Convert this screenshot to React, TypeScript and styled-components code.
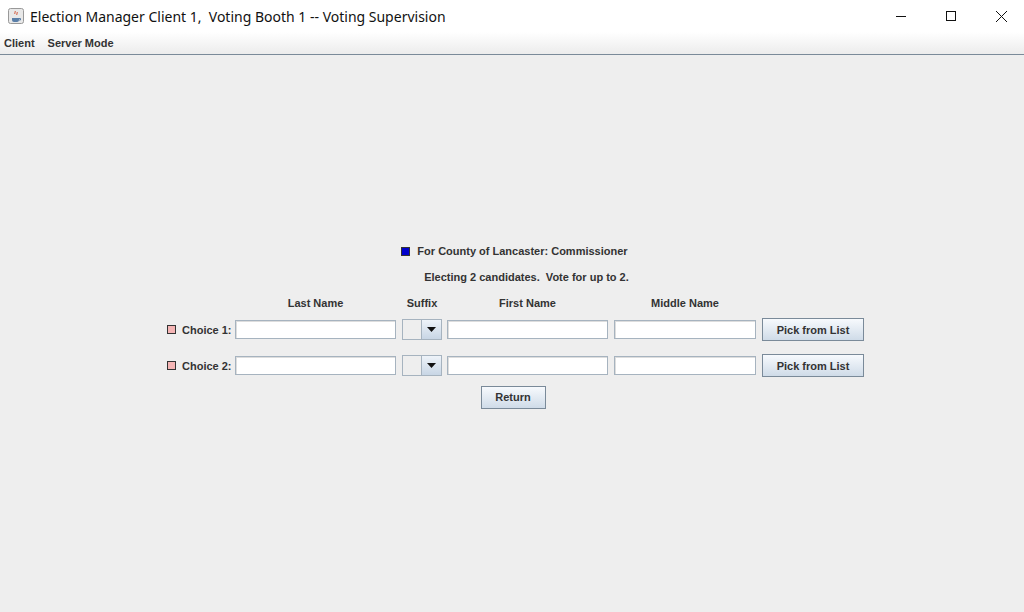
import React from "react";
import styled, { createGlobalStyle } from "styled-components";

const G = createGlobalStyle`
  html, body { margin: 0; padding: 0; width: 1024px; height: 612px; overflow: hidden; background: #eeeeee; }
  * { box-sizing: border-box; }
`;
const Win = styled.div`width:1024px;height:612px;display:flex;flex-direction:column;font-family:"Liberation Sans",Arial,sans-serif;`;
const TitleBar = styled.div`height:32px;background:#fff;display:flex;align-items:center;padding-left:8px;`;
const TitleText = styled.span`font-family:"Segoe UI","Noto Sans",sans-serif;font-size:14px;color:#111;margin-left:6px;white-space:pre;`;
const Controls = styled.div`margin-left:auto;display:flex;`;
const Ctl = styled.div<{w?:number}>`width:${p=>p.w??46}px;height:32px;display:flex;align-items:center;justify-content:center;`;
const MenuBar = styled.div`height:23px;background:linear-gradient(#ffffff,#ececec);border-bottom:1px solid #7a8a99;display:flex;align-items:center;gap:13px;padding-left:4px;`;
const MenuItem = styled.span`font-size:11px;font-weight:bold;color:#333;`;
const Body = styled.div`flex:1;background:#eeeeee;display:flex;flex-direction:column;padding-top:189px;`;
const Center = styled.div<{shift?:number}>`display:flex;justify-content:center;align-items:center;gap:7px;height:14px;margin-left:${p=>p.shift??0}px;`;
const Txt = styled.span`font-size:11px;font-weight:bold;color:#333;white-space:pre;`;
const Square = styled.div<{c:string}>`width:9px;height:9px;background:${p=>p.c};border:1px solid #333;`;
const Grid = styled.div`display:grid;grid-template-columns:8px 60px 161px 6px 40px 5px 161px 6px 142px 6px 102px;padding-left:167px;align-items:center;`;
const Head = styled.div`font-size:11px;font-weight:bold;color:#333;text-align:center;height:14px;white-space:nowrap;`;
const Label = styled.div`font-size:11px;font-weight:bold;color:#333;padding-left:7px;white-space:nowrap;`;
const Input = styled.div`height:19px;background:#fff;border:1px solid #a6b3bf;box-shadow:inset 1px 1px 0 #ddd;`;
const Combo = styled.div`height:21px;display:flex;border:1px solid #a6b3bf;`;
const ComboField = styled.div`flex:1;background:#eeeeee;border-right:1px solid #a6b3bf;`;
const ComboBtn = styled.div`width:19px;background:linear-gradient(#eef3f9,#c8d6e5);display:flex;align-items:center;justify-content:center;`;
const Btn = styled.div<{w?:number}>`height:23px;width:${p=>p.w??102}px;border:1px solid #7a8a99;background:linear-gradient(#f7fafd,#cfdbe8);font-size:11px;font-weight:bold;color:#333;display:flex;align-items:center;justify-content:center;`;
const Spacer = styled.div<{h:number}>`height:${p=>p.h}px;`;

const Row = ({n}:{n:number}) => (<>
  <Square c="#f5b5b5" />
  <Label>Choice {n}:</Label>
  <Input /><div />
  <Combo><ComboField /><ComboBtn><svg width="9" height="5"><path d="M0 0H9L4.5 5Z" fill="#111"/></svg></ComboBtn></Combo><div />
  <Input /><div />
  <Input /><div />
  <Btn>Pick from List</Btn>
</>);

export default function App() {
  return (<Win><G />
    <TitleBar>
      <svg width="16" height="16" viewBox="0 0 16 16"><rect x="0.5" y="0.5" width="15" height="15" rx="2" fill="#e8e8e8" stroke="#999"/><path d="M4 10h7v2a2 2 0 0 1-2 2H6a2 2 0 0 1-2-2z" fill="#5a7fa8"/><path d="M11 10.5h1.5v1.5H11" fill="none" stroke="#5a7fa8"/><path d="M7 3c1 1-1 2 0 3M9 4c1 1-1 2 0 3" stroke="#d24b2a" fill="none"/></svg>
      <TitleText>Election Manager Client 1,  Voting Booth 1 -- Voting Supervision</TitleText>
      <Controls>
        <Ctl><svg width="10" height="10"><path d="M0 5.5H10" stroke="#111"/></svg></Ctl>
        <Ctl w={54}><svg width="10" height="10"><rect x="0.5" y="0.5" width="9" height="9" fill="none" stroke="#111"/></svg></Ctl>
        <Ctl><svg width="11" height="11"><path d="M0 0L11 11M11 0L0 11" stroke="#111"/></svg></Ctl>
      </Controls>
    </TitleBar>
    <MenuBar><MenuItem>Client</MenuItem><MenuItem>Server Mode</MenuItem></MenuBar>
    <Body>
      <Center shift={5}><Square c="#0000cc" /><Txt>For County of Lancaster: Commissioner</Txt></Center>
      <Spacer h={12} />
      <Center shift={29}><Txt>Electing 2 candidates.  Vote for up to 2.</Txt></Center>
      <Spacer h={13} />
      <Grid>
        <div /><div /><Head>Last Name</Head><div /><Head>Suffix</Head><div /><Head>First Name</Head><div /><Head>Middle Name</Head><div /><div />
      </Grid>
      <Spacer h={7} />
      <Grid><Row n={1} /></Grid>
      <Spacer h={13} />
      <Grid><Row n={2} /></Grid>
      <Spacer h={13} />
      <Center shift={2}><Btn w={65}>Return</Btn></Center>
    </Body>
  </Win>);
}
